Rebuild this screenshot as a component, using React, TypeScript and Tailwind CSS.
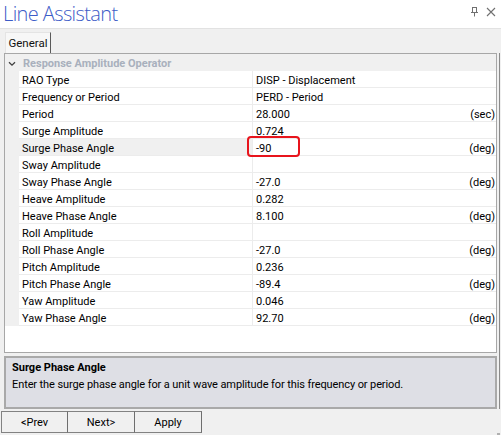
import React from "react";

type Row = { name: string; value: string; unit?: string; selected?: boolean };

const rows: Row[] = [
  { name: "RAO Type", value: "DISP - Displacement" },
  { name: "Frequency or Period", value: "PERD - Period" },
  { name: "Period", value: "28.000", unit: "(sec)" },
  { name: "Surge Amplitude", value: "0.724" },
  { name: "Surge Phase Angle", value: "-90", unit: "(deg)", selected: true },
  { name: "Sway Amplitude", value: "" },
  { name: "Sway Phase Angle", value: "-27.0", unit: "(deg)" },
  { name: "Heave Amplitude", value: "0.282" },
  { name: "Heave Phase Angle", value: "8.100", unit: "(deg)" },
  { name: "Roll Amplitude", value: "" },
  { name: "Roll Phase Angle", value: "-27.0", unit: "(deg)" },
  { name: "Pitch Amplitude", value: "0.236" },
  { name: "Pitch Phase Angle", value: "-89.4", unit: "(deg)" },
  { name: "Yaw Amplitude", value: "0.046" },
  { name: "Yaw Phase Angle", value: "92.70", unit: "(deg)" },
];

const font = { fontFamily: 'Roboto, "Open Sans", sans-serif' };
const titleFont = { fontFamily: '"Open Sans", sans-serif' };

export default function App() {
  return (
    <div
      className="w-[501px] h-[435px] bg-[#f0f0f0] overflow-hidden relative text-black flex flex-col"
      style={font}
    >
      {/* Title bar */}
      <div className="h-[29px] bg-white border-b border-[#e2e2e2] flex items-start justify-between shrink-0">
        <div
          className="pl-[3px] pt-[1px] text-[20px] leading-[26px] font-light text-[#3d5cc7] tracking-[-0.6px]"
          style={titleFont}
        >
          Line Assistant
        </div>
        <div className="flex items-center gap-[7px] pt-[6px] pr-[5px]">
          <svg width="9" height="11" viewBox="0 0 9 11" className="text-[#707070]">
            <path d="M2 1.5H7M2.5 1.5V6.5M6.5 1.5V6.5M1 6.5H8M4.5 6.5V10.5" stroke="currentColor" strokeWidth="1" fill="none" />
          </svg>
          <svg width="10" height="10" viewBox="0 0 10 10" className="text-[#707070]">
            <path d="M1 1L9 9M9 1L1 9" stroke="currentColor" strokeWidth="1.1" fill="none" />
          </svg>
        </div>
      </div>

      {/* Tab strip */}
      <div className="h-[24px] shrink-0 flex items-end pl-[5px]">
        <div className="h-[21px] w-[46px] bg-[#f7f7f7] border-l border-t border-[#e4e4e4] border-r-[1.5px] border-r-[#5a5a5a] flex items-center justify-center text-[11.5px] leading-none text-[#111] pt-[1px]">
          General
        </div>
      </div>

      {/* Body with right dark edge */}
      <div className="flex-1 flex flex-col pl-[4px] pr-[2px] border-r border-r-[#8a8a8a] mr-[1px]">
        {/* Property grid */}
        <div className="h-[300px] border border-[#a7a7a7] bg-white flex flex-col shrink-0">
          <div className="h-[17px] bg-[#f0f0f0] flex items-center shrink-0 pt-[2px]">
            <div className="w-[13px] flex justify-center">
              <svg width="8" height="6" viewBox="0 0 8 6">
                <path d="M1 1.2L4 4.2L7 1.2" stroke="#404040" strokeWidth="1.3" fill="none" />
              </svg>
            </div>
            <div className="pl-[5px] text-[11px] font-bold text-[#a9b0bd] leading-none">
              Response Amplitude Operator
            </div>
          </div>
          {rows.map((r) => (
            <div key={r.name} className="h-[17px] flex shrink-0">
              <div className="w-[14px] bg-[#f0f0f0] shrink-0" />
              <div
                className={`w-[234px] shrink-0 border-b border-r border-[#ececec] flex items-center pl-[3px] pt-[2px] text-[11px] leading-none ${
                  r.selected ? "bg-[#f0f0f0]" : "bg-white"
                }`}
              >
                {r.name}
              </div>
              <div className="flex-1 border-b border-[#ececec] flex items-center justify-between pl-[3px] pr-[1px] pt-[2px] text-[11px] leading-none relative">
                <span>{r.value}</span>
                <span>{r.unit ?? ""}</span>
                {r.selected && (
                  <div className="absolute left-[-6px] top-[-3px] w-[53px] h-[21px] border-2 border-[#e8141c] rounded-[4px]" />
                )}
              </div>
            </div>
          ))}
        </div>

        {/* Splitter */}
        <div className="h-[3px] shrink-0" />

        {/* Description panel */}
        <div className="h-[53px] shrink-0 border-2 border-[#a9a9a9] bg-[#dedfe5] px-[6px] pt-[3px] flex flex-col gap-[4px]">
          <div className="text-[11px] font-bold leading-[13px]">Surge Phase Angle</div>
          <div className="text-[11px] leading-[13px] tracking-[-0.1px]">
            Enter the surge phase angle for a unit wave amplitude for this frequency or period.
          </div>
        </div>
      </div>

      {/* Buttons */}
      <div className="h-[27px] shrink-0 flex items-start pl-[1px] pt-[2px] relative">
        {["<Prev", "Next>", "Apply"].map((b, i) => (
          <div
            key={b}
            className={`h-[22px] w-[67px] border-y border-[#828282] border-r border-r-[#6e6e6e] ${
              i === 0 ? "border-l border-l-[#828282]" : ""
            } bg-[#f0f0f0] flex items-center justify-center text-[11px] leading-none`}
          >
            {b}
          </div>
        ))}
        <div className="absolute right-[1px] bottom-[1px] w-[3px] h-[2px] bg-[#b0b0b0]" />
      </div>
    </div>
  );
}
